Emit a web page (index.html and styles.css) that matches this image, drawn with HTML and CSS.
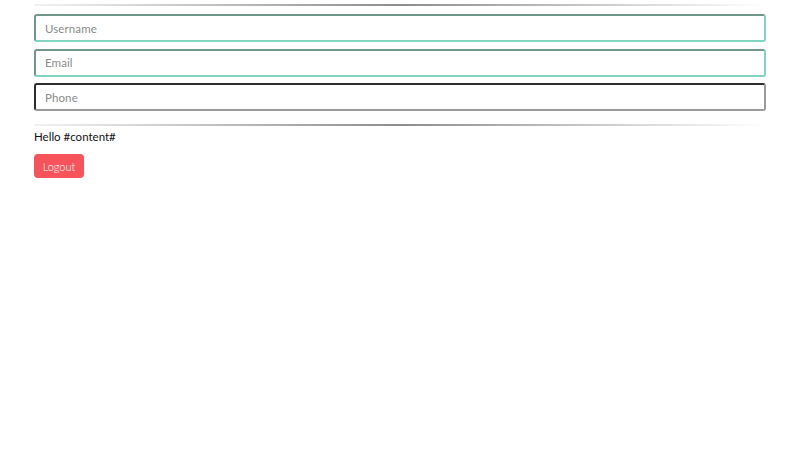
FILE: index.html
```html
<!DOCTYPE html>
<html>
<head>
<meta charset="utf-8">
<link rel="stylesheet" href="styles.css">
</head>
<body>
<div class="page">
  <hr class="rule top">
  <form class="fields">
    <input class="field teal" type="text" placeholder="Username">
    <input class="field teal" type="email" placeholder="Email">
    <input class="field dark" type="tel" placeholder="Phone">
  </form>
  <hr class="rule bottom">
  <p class="hello">Hello #content#</p>
  <button class="logout" type="button">Logout</button>
</div>
</body>
</html>
```
FILE: styles.css
```css
html, body {
  margin: 0;
  padding: 0;
  background: #fff;
}
body {
  font-family: Lato, "Open Sans", sans-serif;
  color: #111;
}
.page {
  padding: 4px 34px 0 34px;
  display: flex;
  flex-direction: column;
  align-items: flex-start;
}
.rule {
  width: 100%;
  height: 2px;
  border: 0;
  margin: 0;
  background: linear-gradient(to right, rgba(0,0,0,0.05), rgba(0,0,0,0.45) 50%, rgba(0,0,0,0));
}
.fields {
  width: 100%;
  display: flex;
  flex-direction: column;
  gap: 6.5px;
  margin-top: 8px;
}
.field {
  box-sizing: border-box;
  width: 100%;
  height: 28px;
  margin: 0;
  padding: 0 9px;
  border-width: 2px;
  border-style: solid;
  border-radius: 3px;
  font-family: Lato, "Open Sans", sans-serif;
  font-size: 11.5px;
  letter-spacing: 0.1px;
  background: #fff;
  outline: none;
}
.field::placeholder {
  color: #8a8a8a;
}
.teal {
  border-top-color: #6f978b;
  border-left-color: #6f978b;
  border-bottom-color: #7fd3bf;
  border-right-color: #7fd3bf;
}
.dark {
  border-top-color: #2e2e2e;
  border-left-color: #2e2e2e;
  border-bottom-color: #9a9a9a;
  border-right-color: #9a9a9a;
}
.rule.bottom {
  margin-top: 13px;
}
.hello {
  margin: 3px 0 0 0;
  font-size: 11.5px;
  line-height: 16px;
}
.logout {
  margin-top: 9px;
  width: 50px;
  height: 24px;
  padding: 0;
  border: 0;
  border-radius: 4px;
  background: #f6535a;
  color: #fff;
  font-family: Lato, "Open Sans", sans-serif;
  font-size: 11px;
  font-weight: 300;
}
```
